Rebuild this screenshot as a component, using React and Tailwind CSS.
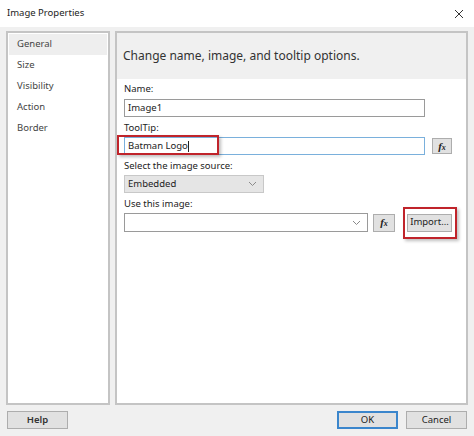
import React from "react";

const font = { fontFamily: '"Noto Sans", "Open Sans", sans-serif' };

function Chevron() {
  return (
    <svg width="9" height="6" viewBox="0 0 9 6" className="shrink-0">
      <polyline points="1,1 4.5,4.5 8,1" fill="none" stroke="#8a8a8a" strokeWidth="1" />
    </svg>
  );
}

function Fx({ className }) {
  return (
    <div className={`flex items-center justify-center bg-[#e1e1e1] border border-[#adadad] ${className}`}>
      <span className="text-[11px] font-bold italic text-[#222] leading-none" style={{ fontFamily: '"Liberation Serif", serif' }}>
        f<span className="text-[8px]">x</span>
      </span>
    </div>
  );
}

export default function App() {
  return (
    <div className="w-[474px] h-[436px] bg-[#f0f0f0] flex flex-col text-[#222] overflow-hidden" style={font}>
      {/* title bar */}
      <div className="h-[27px] bg-white flex items-center justify-between pl-[7px] pr-[10px] shrink-0">
        <span className="text-[9.5px] text-[#222]">Image Properties</span>
        <svg width="10" height="10" viewBox="0 0 10 10">
          <path d="M1 1 L9 9 M9 1 L1 9" stroke="#333" strokeWidth="1" />
        </svg>
      </div>
      <div className="h-[4px] shrink-0" />
      {/* panels */}
      <div className="flex px-[6px] gap-[5px] h-[374px] shrink-0">
        <div className="w-[104px] bg-white border-2 border-[#c4c4c4] flex flex-col pt-[1px] px-[1px]">
          {["General", "Size", "Visibility", "Action", "Border"].map((t, i) => (
            <div
              key={t}
              className={`h-[21px] flex items-center pl-[8px] text-[9.5px] text-[#444] ${i === 0 ? "bg-[#eeeeee]" : ""}`}
            >
              {t}
            </div>
          ))}
        </div>
        <div className="flex-1 bg-white border-2 border-[#c4c4c4] flex flex-col relative">
          <div className="h-[46px] bg-[#f0f0f0] flex items-center pl-[6px] shrink-0">
            <span className="text-[12px] text-[#333]">Change name, image, and tooltip options.</span>
          </div>
          <div className="flex flex-col pl-[7px] text-[9.5px]">
            <div className="mt-[2px] h-[16px] flex items-center">Name:</div>
            <div className="mt-[2px] h-[18px] w-[301px] border border-[#9a9a9a] flex items-center pl-[3px]">Image1</div>
            <div className="mt-[3px] h-[16px] flex items-center">ToolTip:</div>
            <div className="mt-[1px] h-[18px] flex items-center">
              <div className="h-[18px] w-[301px] border border-[#7ab0dc] flex items-center pl-[3px]">
                Batman Logo<span className="inline-block w-px h-[11px] bg-[#222]" />
              </div>
              <Fx className="ml-[7px] w-[20px] h-[16px]" />
            </div>
            <div className="mt-[3px] h-[16px] flex items-center">Select the image source:</div>
            <div className="mt-[1px] h-[18px] w-[140px] bg-[#e5e5e5] border border-[#c8c8c8] flex items-center justify-between pl-[3px] pr-[6px]">
              <span>Embedded</span>
              <Chevron />
            </div>
            <div className="mt-[3px] h-[16px] flex items-center">Use this image:</div>
            <div className="mt-[1px] h-[19px] flex items-center">
              <div className="h-[19px] w-[244px] border border-[#9a9a9a] flex items-center justify-end pr-[6px]">
                <Chevron />
              </div>
              <Fx className="ml-[5px] w-[22px] h-[18px]" />
              <div className="ml-[12px] w-[45px] h-[18px] bg-[#e1e1e1] border border-[#adadad] flex items-center justify-center text-[9.5px]">
                Import...
              </div>
            </div>
          </div>
          {/* red highlight boxes */}
          <div className="absolute left-[0px] top-[102px] w-[102px] h-[20px] border-2 border-[#c0242b] shadow-[2px_2px_3px_rgba(0,0,0,0.25)]" />
          <div className="absolute left-[286px] top-[174px] w-[54px] h-[32px] border-2 border-[#c0242b] shadow-[2px_2px_3px_rgba(0,0,0,0.25)]" />
        </div>
      </div>
      {/* bottom buttons */}
      <div className="flex items-center pl-[7px] pr-[7px] mt-[6px]">
        <div className="w-[61px] h-[18px] bg-[#e1e1e1] border border-[#adadad] flex items-center justify-center text-[9.5px] font-semibold text-[#333]">Help</div>
        <div className="flex-1" />
        <div className="w-[61px] h-[18px] bg-[#e1e1e1] border-2 border-[#3b86cc] flex items-center justify-center text-[9.5px] text-[#222]">OK</div>
        <div className="ml-[8px] w-[61px] h-[18px] bg-[#e1e1e1] border border-[#adadad] flex items-center justify-center text-[9.5px] text-[#222]">Cancel</div>
      </div>
    </div>
  );
}
